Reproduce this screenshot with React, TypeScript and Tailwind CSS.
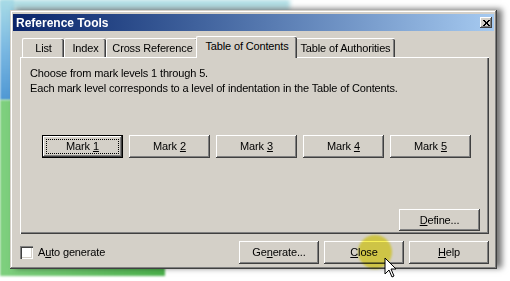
import React from "react";

const font = "font-['Liberation_Sans',Arial,sans-serif]";
const raised =
  "shadow-[inset_-1px_-1px_0_#404040,inset_1px_1px_0_#ffffff,inset_-2px_-2px_0_#808080,inset_2px_2px_0_#d4d0c8]";

function Btn({ children, w = "w-[81px]", def = false }: { children: React.ReactNode; w?: string; def?: boolean }) {
  if (def) {
    return (
      <div className={`${w} h-[23px] border border-black bg-[#d4d0c8] ${raised} flex items-center justify-center p-[3px]`}>
        <div className="w-full h-full outline outline-1 outline-dotted outline-black -outline-offset-1 flex items-center justify-center">
          {children}
        </div>
      </div>
    );
  }
  return (
    <div className={`${w} h-[23px] bg-[#d4d0c8] ${raised} flex items-center justify-center`}>{children}</div>
  );
}

function Tab({ label, w, active = false }: { label: string; w: string; active?: boolean }) {
  if (active) {
    return (
      <div className={`relative z-10 -mx-[2px] -mb-px h-[22px] ${w} pt-[2px] bg-[#d4d0c8] border-t border-l border-white rounded-tl-[2px] rounded-tr-[2px] shadow-[inset_-1px_0_0_#404040,inset_-2px_0_0_#808080] flex justify-center items-start`}>
        <span className="leading-[15px]">{label}</span>
      </div>
    );
  }
  return (
    <div className={`h-[19px] ${w} pt-[2px] bg-[#d4d0c8] border-t border-l border-white rounded-tl-[2px] rounded-tr-[2px] shadow-[inset_-1px_0_0_#404040,inset_-2px_0_0_#808080] flex justify-center items-start`}>
      <span className="leading-[15px]">{label}</span>
    </div>
  );
}

export default function App() {
  return (
    <div className={`relative w-[510px] h-[281px] overflow-hidden bg-white ${font} text-[11px] tracking-[-0.15px] text-black`}>
      {/* desktop behind */}
      <div className="absolute left-0 top-0 w-[290px] h-[12px] bg-gradient-to-b from-[#9fd8e0] to-[#d8eef2] blur-[2px]" />
      <div className="absolute left-0 top-0 w-[14px] h-[100px] bg-gradient-to-b from-[#a8dbe6] via-[#7ab8e2] to-[#4f98d4] blur-[1px]" />
      <div className="absolute left-0 top-[100px] w-[165px] h-[176px] bg-gradient-to-r from-[#7fd07f] to-[#4cb14c] blur-[1px]" />

      <div className="pl-[10px] pt-[10px]">
        <div className="relative w-[487px] h-[259px] bg-[#d4d0c8] p-[3px] flex flex-col shadow-[inset_-1px_-1px_0_#404040,inset_1px_1px_0_#d4d0c8,inset_-2px_-2px_0_#808080,inset_2px_2px_0_#ffffff,5px_-1px_6px_rgba(0,0,0,0.55)]">
          {/* title bar */}
          <div className="h-[17px] mt-[1px] bg-gradient-to-r from-[#0a246a] to-[#a6caf0] flex items-center justify-between pl-[3px] pr-[2px]">
            <span className="text-white font-bold text-[12px] tracking-normal leading-none">Reference Tools</span>
            <div className={`w-[12px] h-[11px] bg-[#d4d0c8] ${raised} flex items-center justify-center`}>
              <svg width="7" height="6" viewBox="0 0 7 6">
                <path d="M0 0h2v1H0zM5 0h2v1H5zM1 1h2v1H1zM4 1h2v1H4zM2 2h3v2H2zM1 4h2v1H1zM4 4h2v1H4zM0 5h2v1H0zM5 5h2v1H5z" fill="#000" />
              </svg>
            </div>
          </div>

          {/* tabs */}
          <div className="mt-[5px] ml-[7px] mr-[5px] flex flex-col">
            <div className="flex items-end pl-[2px] h-[21px]">
              <Tab label="List" w="w-[42px]" />
              <Tab label="Index" w="w-[42px]" />
              <Tab label="Cross Reference" w="w-[92px]" />
              <Tab label="Table of Contents" w="w-[101px]" active />
              <Tab label="Table of Authorities" w="w-[100px]" />
            </div>
            <div className="h-[177px] border-t border-l border-white shadow-[inset_-1px_-1px_0_#404040,inset_-2px_-2px_0_#808080] flex flex-col pl-[9px] pt-[8px] pr-[9px]">
              <div className="leading-[15px]">Choose from mark levels 1 through 5.</div>
              <div className="leading-[15px]">Each mark level corresponds to a level of indentation in the Table of Contents.</div>
              <div className="mt-[39px] ml-[12px] flex gap-[6px]">
                <Btn def>Mark <u className="ml-[3px]">1</u></Btn>
                <Btn>Mark <u className="ml-[3px]">2</u></Btn>
                <Btn>Mark <u className="ml-[3px]">3</u></Btn>
                <Btn>Mark <u className="ml-[3px]">4</u></Btn>
                <Btn>Mark <u className="ml-[3px]">5</u></Btn>
              </div>
              <div className="mt-[51px] flex justify-end">
                <div className="w-[81px] h-[22px] bg-[#d4d0c8] shadow-[inset_-1px_-1px_0_#404040,inset_1px_1px_0_#ffffff,inset_-2px_-2px_0_#808080] flex items-center justify-center">
                  <span><u>D</u>efine...</span>
                </div>
              </div>
            </div>
          </div>

          {/* bottom row */}
          <div className="mt-[7px] ml-[7px] mr-[5px] flex items-center">
            <div className="w-[13px] h-[13px] bg-white shadow-[inset_1px_1px_0_#808080,inset_2px_2px_0_#404040,inset_-1px_-1px_0_#ffffff,inset_-2px_-2px_0_#d4d0c8]" />
            <span className="ml-[5px]">A<u>u</u>to generate</span>
            <div className="ml-auto flex gap-[5px]">
              <div className={`w-[80px] h-[23px] bg-[#d4d0c8] ${raised} flex items-center justify-center`}>
                <span>Ge<u>n</u>erate...</span>
              </div>
              <div className={`w-[80px] h-[23px] bg-[#d4d0c8] ${raised} flex items-center justify-center`}>
                <span><u>C</u>lose</span>
              </div>
              <div className={`w-[80px] h-[23px] bg-[#d4d0c8] ${raised} flex items-center justify-center`}>
                <span><u>H</u>elp</span>
              </div>
            </div>
          </div>
        </div>
      </div>

      {/* click highlight + cursor */}
      <div className="absolute left-[358px] top-[235px] w-[34px] h-[34px] rounded-full bg-[#f6ee30]/80 blur-[1px] mix-blend-multiply" />
      <svg className="absolute left-[384px] top-[257px]" width="13" height="22" viewBox="0 0 13 22">
        <path d="M1 1 L1 17 L5 13 L8 20 L10 19 L7 12 L12 12 Z" fill="#ffffff" stroke="#000" strokeWidth="1" strokeLinejoin="miter" />
      </svg>
    </div>
  );
}
